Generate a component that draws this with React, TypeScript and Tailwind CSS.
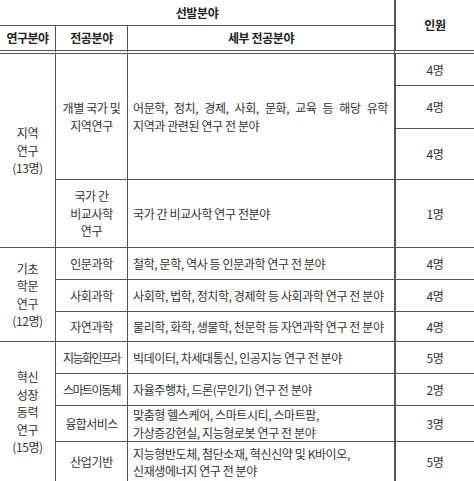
export default function App() {
  const line = 'border-[#555]'
  const cell = `flex items-center whitespace-nowrap overflow-hidden ${line}`
  const center = `${cell} justify-center text-center`
  const left = `${cell} justify-start text-left pl-[5px]`

  return (
    <div
      className="w-[474px] h-[481px] overflow-hidden bg-white text-[#333] text-[12px] leading-[17.5px] tracking-[-0.4px]"
      style={{ fontFamily: '"Noto Sans CJK KR", "Noto Sans", sans-serif' }}
    >
      <div className="grid grid-cols-[56px_72px_266px_80px] grid-rows-[26px_28px_32px_43px_51px_68px_32px_32px_30px_32px_32px_36px_40px]">
        {/* header */}
        <div className={`${center} col-start-1 col-span-3 row-start-1 border-b font-bold text-[#222]`}>선발분야</div>
        <div className={`${center} col-start-4 row-start-1 row-span-2 border-l-2 border-b-4 border-double font-bold text-[#222]`}>인원</div>
        <div className={`${center} col-start-1 row-start-2 border-r border-b-4 border-double font-bold text-[#222] tracking-[-0.6px]`}>연구분야</div>
        <div className={`${center} col-start-2 row-start-2 border-r border-b-4 border-double font-bold text-[#222]`}>전공분야</div>
        <div className={`${center} col-start-3 row-start-2 border-b-4 border-double font-bold text-[#222]`}>세부 전공분야</div>

        {/* 지역연구 */}
        <div className={`${center} col-start-1 row-start-3 row-span-4 border-r border-b`}>
          <div>지역<br />연구<br />(13명)</div>
        </div>
        <div className={`${center} col-start-2 row-start-3 row-span-3 border-r border-b`}>
          <div>개별 국가 및<br />지역연구</div>
        </div>
        <div className={`${left} col-start-3 row-start-3 row-span-3 border-b pr-[6px]`}>
          <div className="w-full">
            <div className="text-justify [text-align-last:justify]">어문학, 정치, 경제, 사회, 문화, 교육 등 해당 유학</div>
            <div>지역과 관련된 연구 전 분야</div>
          </div>
        </div>
        <div className={`${center} col-start-4 row-start-3 border-l-2 border-b`}>4명</div>
        <div className={`${center} col-start-4 row-start-4 border-l-2 border-b`}>4명</div>
        <div className={`${center} col-start-4 row-start-5 border-l-2 border-b`}>4명</div>

        <div className={`${center} col-start-2 row-start-6 border-r border-b`}>
          <div>국가 간<br />비교사학<br />연구</div>
        </div>
        <div className={`${left} col-start-3 row-start-6 border-b`}>국가 간 비교사학 연구 전분야</div>
        <div className={`${center} col-start-4 row-start-6 border-l-2 border-b`}>1명</div>

        {/* 기초학문연구 */}
        <div className={`${center} col-start-1 row-start-7 row-span-3 border-r border-b`}>
          <div>기초<br />학문<br />연구<br />(12명)</div>
        </div>
        <div className={`${center} col-start-2 row-start-7 border-r border-b`}>인문과학</div>
        <div className={`${left} col-start-3 row-start-7 border-b`}>철학, 문학, 역사 등 인문과학 연구 전 분야</div>
        <div className={`${center} col-start-4 row-start-7 border-l-2 border-b`}>4명</div>

        <div className={`${center} col-start-2 row-start-8 border-r border-b`}>사회과학</div>
        <div className={`${left} col-start-3 row-start-8 border-b`}>사회학, 법학, 정치학, 경제학 등 사회과학 연구 전 분야</div>
        <div className={`${center} col-start-4 row-start-8 border-l-2 border-b`}>4명</div>

        <div className={`${center} col-start-2 row-start-9 border-r border-b`}>자연과학</div>
        <div className={`${left} col-start-3 row-start-9 border-b`}>물리학, 화학, 생물학, 천문학 등 자연과학 연구 전 분야</div>
        <div className={`${center} col-start-4 row-start-9 border-l-2 border-b`}>4명</div>

        {/* 혁신성장동력연구 */}
        <div className={`${center} col-start-1 row-start-10 row-span-4 border-r`}>
          <div>혁신<br />성장<br />동력<br />연구<br />(15명)</div>
        </div>
        <div className={`${center} col-start-2 row-start-10 border-r border-b tracking-[-1.5px]`}>지능화인프라</div>
        <div className={`${left} col-start-3 row-start-10 border-b`}>빅데이터, 차세대통신, 인공지능 연구 전 분야</div>
        <div className={`${center} col-start-4 row-start-10 border-l-2 border-b`}>5명</div>

        <div className={`${center} col-start-2 row-start-11 border-r border-b tracking-[-1.5px]`}>스마트이동체</div>
        <div className={`${left} col-start-3 row-start-11 border-b`}>자율주행차, 드론(무인기) 연구 전 분야</div>
        <div className={`${center} col-start-4 row-start-11 border-l-2 border-b`}>2명</div>

        <div className={`${center} col-start-2 row-start-12 border-r border-b tracking-[-0.6px]`}>융합서비스</div>
        <div className={`${left} col-start-3 row-start-12 border-b`}>
          <div>맞춤형 헬스케어, 스마트시티, 스마트팜,<br />가상증강현실, 지능형로봇 연구 전 분야</div>
        </div>
        <div className={`${center} col-start-4 row-start-12 border-l-2 border-b`}>3명</div>

        <div className={`${center} col-start-2 row-start-13 border-r`}>산업기반</div>
        <div className={`${left} col-start-3 row-start-13`}>
          <div>지능형반도체, 첨단소재, 혁신신약 및 K바이오,<br />신재생에너지 연구 전 분야</div>
        </div>
        <div className={`${center} col-start-4 row-start-13 border-l-2`}>5명</div>
      </div>
    </div>
  )
}
